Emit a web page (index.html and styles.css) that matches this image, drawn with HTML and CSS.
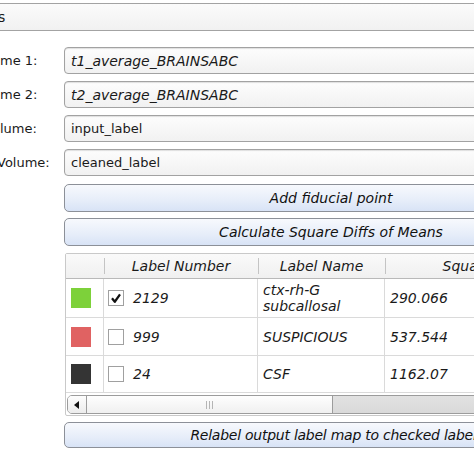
FILE: index.html
```html
<!DOCTYPE html>
<html>
<head>
<meta charset="utf-8">
<link rel="stylesheet" href="styles.css">
</head>
<body>
<div class="panel">
  <div class="section-head"><span class="section-title">s</span></div>
  <div class="form">
    <div class="label">me 1:</div>
    <div class="field italic">t1_average_BRAINSABC</div>
    <div class="label">me 2:</div>
    <div class="field italic">t2_average_BRAINSABC</div>
    <div class="label">lume:</div>
    <div class="field">input_label</div>
    <div class="label cut">Volume:</div>
    <div class="field">cleaned_label</div>
  </div>
  <div class="actions">
    <div class="btn">Add fiducial point</div>
    <div class="btn">Calculate Square Diffs of Means</div>
    <div class="table">
      <div class="grid">
        <div class="th"></div>
        <div class="th sep">Label Number</div>
        <div class="th sep">Label Name</div>
        <div class="th sep">Square Diffs of Means</div>

        <div class="td swatch-cell r1"><span class="swatch green"></span></div>
        <div class="td num r1"><span class="check"><svg viewBox="0 0 15 15" width="15" height="15"><path d="M3.2 7.2 L6.2 11 L11.8 3" fill="none" stroke="#111" stroke-width="2.4" stroke-linejoin="round"/></svg></span>2129</div>
        <div class="td r1 two">ctx-rh-G<br>subcallosal</div>
        <div class="td r1">290.066</div>

        <div class="td swatch-cell r2"><span class="swatch red"></span></div>
        <div class="td num r2"><span class="check"></span>999</div>
        <div class="td r2">SUSPICIOUS</div>
        <div class="td r2">537.544</div>

        <div class="td swatch-cell r3"><span class="swatch dark"></span></div>
        <div class="td num r3"><span class="check"></span>24</div>
        <div class="td r3">CSF</div>
        <div class="td r3">1162.07</div>
      </div>
      <div class="scrollbar">
        <div class="arrow"><svg viewBox="0 0 6 8" width="6" height="8"><path d="M5 0 L0 4 L5 8 Z" fill="#111"/></svg></div>
        <div class="thumb"><span class="grip"></span></div>
        <div class="track"></div>
      </div>
    </div>
    <div class="btn relabel">Relabel output label map to checked labels</div>
  </div>
</div>
</body>
</html>
```
FILE: styles.css
```css
html, body {
  margin: 0;
  padding: 0;
  background: #ffffff;
}
body {
  width: 474px;
  height: 474px;
  overflow: hidden;
  font-family: "DejaVu Sans", "Liberation Sans", sans-serif;
  font-size: 13px;
  color: #1a1a1a;
}
.panel {
  width: 700px;
  display: flex;
  flex-direction: column;
}
.section-head {
  margin-top: 3px;
  margin-left: -4px;
  height: 28px;
  box-sizing: border-box;
  border-top: 1px solid #a3a3a3;
  border-bottom: 1px solid #a3a3a3;
  background: linear-gradient(#fbfbfb, #f1f1f1);
  display: flex;
  align-items: center;
  padding-left: 4px;
  font-size: 14px;
}
.section-title {
  margin-left: -2px;
}
.form {
  margin-top: 16px;
  display: grid;
  grid-template-columns: 64px 534px;
  grid-auto-rows: 27px;
  row-gap: 7px;
}
.label {
  display: flex;
  align-items: center;
  white-space: nowrap;
}
.label.cut {
  margin-left: -3px;
}
.field {
  box-sizing: border-box;
  border: 1px solid #a2a2a2;
  border-radius: 4px;
  background: linear-gradient(#fdfdfd, #f1f1f1);
  box-shadow: inset 0 1px 1px rgba(0,0,0,0.12);
  display: flex;
  align-items: center;
  padding-left: 6px;
}
.italic {
  font-style: italic;
  font-size: 14px;
}
.actions {
  margin-top: 8px;
  margin-left: 64px;
  width: 534px;
  display: flex;
  flex-direction: column;
  gap: 6px;
}
.btn {
  box-sizing: border-box;
  height: 28px;
  border: 1px solid #8c9098;
  border-radius: 5px;
  background: linear-gradient(#f7f9fd, #e6edf9 60%, #d8e3f6);
  display: flex;
  align-items: center;
  justify-content: center;
  font-style: italic;
  font-size: 14px;
  color: #111;
  white-space: nowrap;
}
.btn.relabel {
  height: 26px;
  width: 546px;
  letter-spacing: -0.25px;
}
.table {
  margin-top: 1px;
  margin-left: 1px;
  width: 590px;
  box-sizing: border-box;
  height: 163px;
  border: 1px solid #c9c9c9;
  border-radius: 2px;
  display: flex;
  flex-direction: column;
}
.grid {
  display: grid;
  grid-template-columns: 38px 154px 127px 1fr;
  grid-template-rows: 25px 39px 38px 37px;
}
.th {
  position: relative;
  background: linear-gradient(#fafafa, #f0f0f0);
  border-bottom: 1px solid #b9b9b9;
  display: flex;
  align-items: center;
  justify-content: center;
  font-style: italic;
  font-size: 14px;
  color: #1a1a1a;
  white-space: nowrap;
}
.th.sep::before {
  content: "";
  position: absolute;
  left: 0;
  top: 4px;
  bottom: 4px;
  width: 1px;
  background: #c4c4c4;
}
.td {
  border-right: 1px solid #dadada;
  border-bottom: 1px solid #dadada;
  display: flex;
  align-items: center;
  padding-left: 5px;
  font-style: italic;
  font-size: 14px;
  color: #1a1a1a;
}
.td.two {
  line-height: 16px;
}
.swatch {
  width: 20px;
  height: 20px;
  display: block;
}
.green { background: #7dd13a; }
.red { background: #e06262; }
.dark { background: #343434; }
.num {
  padding-left: 4px;
}
.check {
  box-sizing: border-box;
  width: 16px;
  height: 16px;
  border: 1px solid #a0a0a0;
  background: #fff;
  margin-right: 9px;
  display: flex;
  align-items: center;
  justify-content: center;
}
.check svg {
  display: block;
}
.scrollbar {
  margin: 2px 0 0 1px;
  box-sizing: border-box;
  height: 19px;
  border: 1px solid #9c9c9c;
  border-radius: 5px;
  display: flex;
  overflow: hidden;
}
.arrow {
  width: 19px;
  box-sizing: border-box;
  border-right: 1px solid #9c9c9c;
  background: linear-gradient(#fdfdfd, #ececec);
  display: flex;
  align-items: center;
  justify-content: center;
}
.thumb {
  width: 246px;
  box-sizing: border-box;
  border-right: 1px solid #9c9c9c;
  background: linear-gradient(#fefefe, #f0f0f0);
  display: flex;
  align-items: center;
  justify-content: center;
}
.grip {
  width: 7px;
  height: 8px;
  background: repeating-linear-gradient(90deg, #b5b5b5 0 1px, transparent 1px 3px);
}
.track {
  flex: 1;
  background: linear-gradient(#e2e2e2, #d9d9d9);
}
```
